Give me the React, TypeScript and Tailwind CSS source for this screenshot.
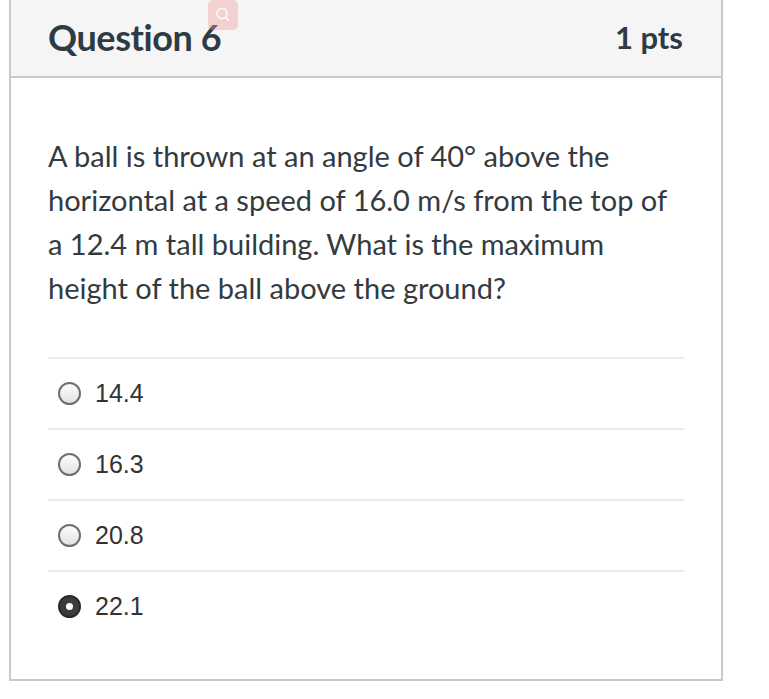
const OPTIONS = [
  { label: "14.4", selected: false },
  { label: "16.3", selected: false },
  { label: "20.8", selected: false },
  { label: "22.1", selected: true },
];

const Radio = ({ selected }: { selected: boolean }) =>
  selected ? (
    <span className="flex h-[23px] w-[23px] items-center justify-center rounded-full bg-[#3c3c3c] border-2 border-[#2a2a2a]">
      <span className="h-[7px] w-[7px] rounded-full bg-white" />
    </span>
  ) : (
    <span className="h-[23px] w-[23px] rounded-full border-2 border-[#6f6f6f] bg-gradient-to-b from-[#fdfdfd] to-[#e2e2e2]" />
  );

export default function App() {
  return (
    <div className="relative h-[699px] w-[769px] bg-white">
      <div className="ml-[9px] w-[714px] border-x-2 border-b-2 border-[#c9c9c9]">
        <div className="flex h-[78px] items-center justify-between border-b-2 border-[#c9c9c9] bg-[#f5f5f5] pl-[37px] pr-[38px] pb-[2px] font-['Lato',sans-serif] font-bold text-[#2d3b45]">
          <span className="text-[36px] tracking-[-0.4px]">Question 6</span>
          <span className="text-[31px]">1 pts</span>
        </div>
        <div className="px-[37px] pt-[56px] pb-[38px]">
          <p className="font-['Lato',sans-serif] text-[29px] leading-[44px] text-[#333b40]">
            A ball is thrown at an angle of 40° above the horizontal at a speed of 16.0 m/s from the top of a 12.4 m tall building. What is the maximum height of the ball above the ground?
          </p>
          <div className="mt-[47px]">
            {OPTIONS.map((o) => (
              <div
                key={o.label}
                className="flex h-[71px] items-center gap-[14px] border-t-2 border-[#ebebeb] pl-[10px] pr-[3px]"
              >
                <Radio selected={o.selected} />
                <span className="font-['Liberation_Sans',Arial,sans-serif] text-[25px] text-[#333]">
                  {o.label}
                </span>
              </div>
            ))}
          </div>
        </div>
      </div>
      {/* faint search overlay from the screenshot tool */}
      <div className="absolute left-[208px] top-0 flex h-[30px] w-[30px] items-center justify-center rounded-[5px] bg-[#f29a9a]/40">
        <svg width="18" height="18" viewBox="0 0 18 18" fill="none" stroke="white" strokeWidth="1.8" opacity="0.8">
          <circle cx="8" cy="7.5" r="5" />
          <path d="M11.5 11.2l3.5 3.8" />
        </svg>
      </div>
    </div>
  );
}
